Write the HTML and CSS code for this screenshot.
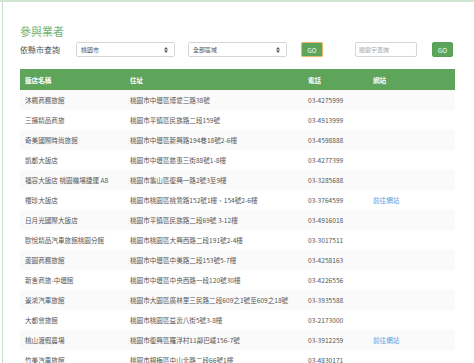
FILE: index.html
```html
<!DOCTYPE html>
<html lang="zh-Hant">
<head>
<meta charset="utf-8">
<title>參與業者</title>
<link rel="stylesheet" href="styles.css">
</head>
<body>
<div class="frame">
  <div class="panel">
    <h1 class="title">參與業者</h1>
    <div class="filters">
      <span class="label">依縣市查詢</span>
      <div class="select sel1"><span>桃園市</span><svg class="arrow" width="4" height="6" viewBox="0 0 4 6"><path d="M0 2.4 L2 0 L4 2.4 Z M0 3.6 L2 6 L4 3.6 Z" fill="#555"/></svg></div>
      <div class="select sel2"><span>全部區域</span><svg class="arrow" width="4" height="6" viewBox="0 0 4 6"><path d="M0 2.4 L2 0 L4 2.4 Z M0 3.6 L2 6 L4 3.6 Z" fill="#555"/></svg></div>
      <button class="go go-focus">GO</button>
      <div class="keyword">關鍵字查詢</div>
      <button class="go go2">GO</button>
    </div>
    <table class="list">
      <colgroup>
        <col class="c1"><col class="c2"><col class="c3"><col class="c4">
      </colgroup>
      <thead>
        <tr><th>飯店名稱</th><th>住址</th><th>電話</th><th>網站</th></tr>
      </thead>
      <tbody>
        <tr><td>沐楓商務旅館</td><td>桃園市中壢區博愛三路38號</td><td>03-4275999</td><td></td></tr>
        <tr><td>三揚精品商旅</td><td>桃園市平鎮區民族路二段159號</td><td>03-4913999</td><td></td></tr>
        <tr><td>奇美國際時尚旅館</td><td>桃園市中壢區新興路194巷18號2-6樓</td><td>03-4598888</td><td></td></tr>
        <tr><td>凱都大飯店</td><td>桃園市中壢區慈惠三街88號1-8樓</td><td>03-4277399</td><td></td></tr>
        <tr><td>福容大飯店 桃園機場捷運 A8</td><td>桃園市龜山區復興一路2號3至9樓</td><td>03-3285688</td><td></td></tr>
        <tr><td>櫻珍大飯店</td><td>桃園市桃園區桃鶯路152號1樓、154號2-6樓</td><td>03-3764599</td><td><a class="link" href="#">前往網站</a></td></tr>
        <tr><td>日月光國際大飯店</td><td>桃園市平鎮區民族路二段69號 3-12樓</td><td>03-4916018</td><td></td></tr>
        <tr><td>歐悅精品汽車旅館桃園分館</td><td>桃園市桃園區大興西路二段191號2-4樓</td><td>03-3017511</td><td></td></tr>
        <tr><td>蘆園商務旅館</td><td>桃園市中壢區中美路二段153號5-7樓</td><td>03-4258163</td><td></td></tr>
        <tr><td>新舍商旅-中壢館</td><td>桃園市中壢區中央西路一段120號30樓</td><td>03-4226556</td><td></td></tr>
        <tr><td>景鴻汽車旅館</td><td>桃園市大園區廣林里三民路二段609之1號至609之18號</td><td>03-3935588</td><td></td></tr>
        <tr><td>大都會旅館</td><td>桃園市桃園區益壽八街5號3-8樓</td><td>03-2173000</td><td></td></tr>
        <tr><td>桃山渡假農場</td><td>桃園市復興區羅浮村11鄰巴崚156-7號</td><td>03-3912259</td><td><a class="link" href="#">前往網站</a></td></tr>
        <tr><td>竹美汽車旅館</td><td>桃園市楊梅區中山北路二段66號1樓</td><td>03-4830171</td><td></td></tr>
      </tbody>
    </table>
  </div>
</div>
</body>
</html>
```
FILE: styles.css
```css
html, body {
  margin: 0;
  padding: 0;
  background: #ffffff;
  overflow: hidden;
}
body {
  font-family: "Noto Sans CJK TC", "Noto Sans", sans-serif;
  color: #555;
}
.frame {
  border-top: 2px solid #cfe5cf;
  height: 361px;
  overflow: hidden;
}
.panel {
  margin-left: 2px;
  width: 450px;
  border-left: 1px solid #cbdccb;
  border-right: 3px solid #97cb97;
  padding: 22px 15px 0 17px;
  height: 400px;
  background: #fff;
}
.title {
  margin: 0;
  font-size: 11px;
  line-height: 14px;
  height: 14px;
  font-weight: normal;
  color: #72b26d;
}
.filters {
  display: flex;
  align-items: center;
  margin-top: 4px;
  height: 15px;
}
.label {
  font-size: 8px;
  color: #555;
  width: 56px;
  flex: none;
}
.select {
  box-sizing: border-box;
  height: 15px;
  width: 99px;
  border: 1px solid #d6d6d6;
  border-radius: 2px;
  background: #fff;
  display: flex;
  align-items: center;
  justify-content: space-between;
  padding: 0 6px 0 4px;
  font-size: 6px;
  color: #555;
  flex: none;
}
.sel2 {
  margin-left: 13px;
}
.arrow {
  display: block;
}
.go {
  box-sizing: border-box;
  height: 15px;
  width: 22px;
  padding: 0;
  border: 1px solid #58a055;
  border-radius: 2px;
  background: #5ca459;
  color: #fff;
  font-family: "Noto Sans CJK TC", "Noto Sans", sans-serif;
  font-size: 6.5px;
  flex: none;
}
.go-focus {
  margin-left: 14px;
  border-color: #e8b66c;
  box-shadow: 0 0 1px #e8b66c;
}
.keyword {
  box-sizing: border-box;
  margin-left: 32px;
  width: 62px;
  height: 15px;
  border: 1px solid #d6d6d6;
  border-radius: 2px;
  font-size: 6px;
  color: #a8a8a8;
  padding-left: 3px;
  display: flex;
  align-items: center;
  flex: none;
}
.go2 {
  margin-left: 15px;
  width: 21px;
}
.list {
  margin-top: 12px;
  width: 435px;
  border-collapse: collapse;
  table-layout: fixed;
  font-size: 6.6px;
}
.c1 { width: 105px; }
.c2 { width: 178px; }
.c3 { width: 65px; }
.c4 { width: 87px; }
.list th {
  background: #5fa45b;
  color: #fff;
  text-align: left;
  font-weight: bold;
  height: 21px;
  padding: 0 5px;
  font-size: 6.6px;
}
.list td {
  height: 20px;
  padding: 0 5px;
  white-space: nowrap;
  overflow: visible;
  color: #555;
}
.list tbody tr:nth-child(odd) td {
  background: #fafafa;
}
.link {
  color: #5d9be0;
  text-decoration: none;
}
```
